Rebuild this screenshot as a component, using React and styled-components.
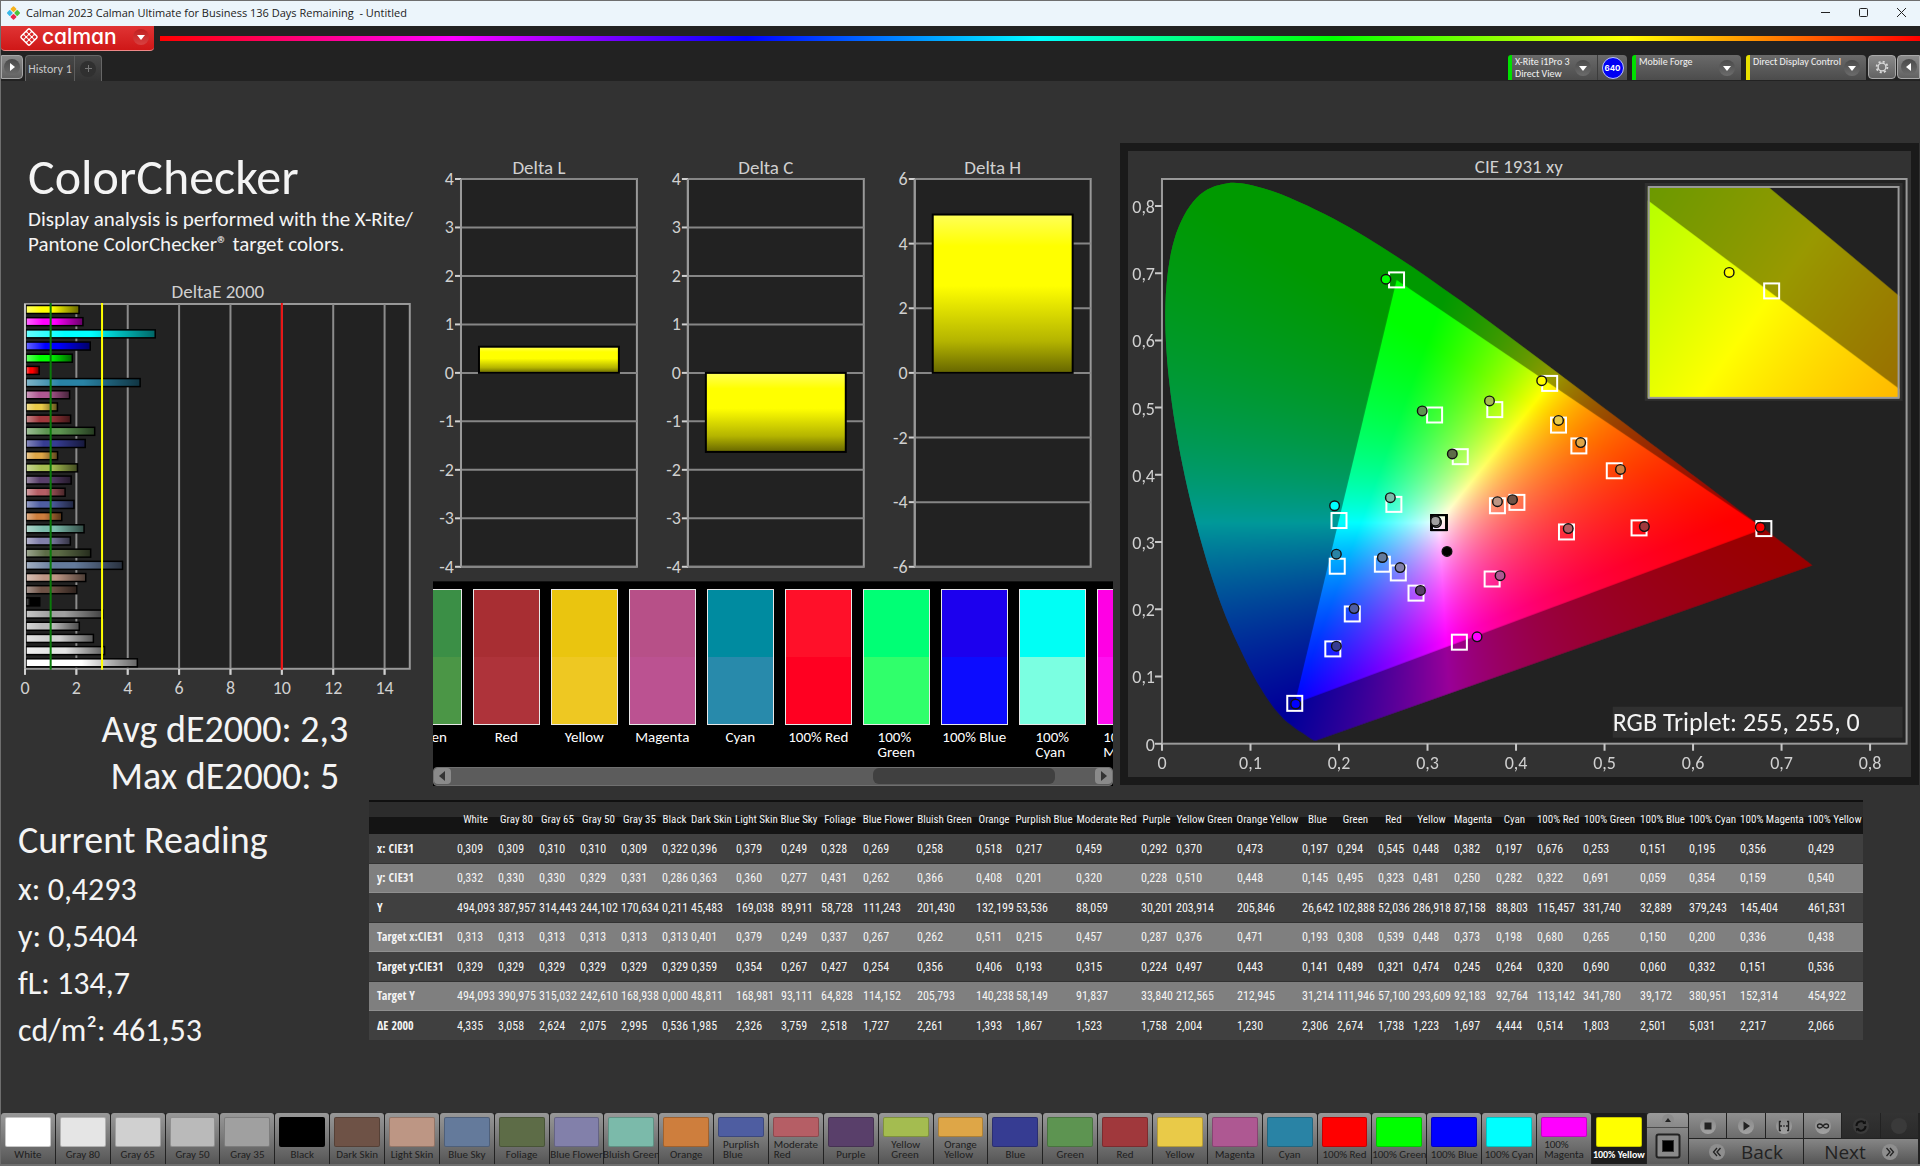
import React, { useLayoutEffect, useRef } from 'react';
import styled, { createGlobalStyle, css } from 'styled-components';

const UI = '"Carlito", "Calibri", "Lato", sans-serif';
const NARROW = '"Roboto Condensed", "Carlito", "Roboto", sans-serif';
const NARROW_BOLD = '"Open Sans Condensed", "Roboto Condensed", "Open Sans", sans-serif';

const GlobalStyle = createGlobalStyle`
  *, *::before, *::after { box-sizing: border-box; }
  body { margin: 0; background: #323232; color: #f4f4f4; font-family: ${UI}; }
  button { font-family: inherit; margin: 0; padding: 0; border: 0; color: inherit; cursor: pointer; }
  h1, h2, p, ul { margin: 0; padding: 0; }
  ul { list-style: none; }
`;

/* ---------- data ---------- */

// name, colour, x, y, Y, target x, target y, target Y, dE2000, column width
const PATCHES = [
  ['White', '#ffffff', '0,309', '0,332', '494,093', '0,313', '0,329', '494,093', '4,335', 41],
  ['Gray 80', '#e5e5e5', '0,309', '0,330', '387,957', '0,313', '0,329', '390,975', '3,058', 41],
  ['Gray 65', '#d0d0d0', '0,310', '0,330', '314,443', '0,313', '0,329', '315,032', '2,624', 41],
  ['Gray 50', '#bababa', '0,310', '0,329', '244,102', '0,313', '0,329', '242,610', '2,075', 41],
  ['Gray 35', '#a0a0a0', '0,309', '0,331', '170,634', '0,313', '0,329', '168,938', '2,995', 41],
  ['Black', '#000000', '0,322', '0,286', '0,211', '0,313', '0,329', '0,000', '0,536', 29],
  ['Dark Skin', '#6e5246', '0,396', '0,363', '45,483', '0,401', '0,359', '48,811', '1,985', 45],
  ['Light Skin', '#bd9684', '0,379', '0,360', '169,038', '0,379', '0,354', '168,981', '2,326', 45],
  ['Blue Sky', '#647a9b', '0,249', '0,277', '89,911', '0,249', '0,267', '93,111', '3,759', 40],
  ['Foliage', '#5d6c47', '0,328', '0,431', '58,728', '0,337', '0,427', '64,828', '2,518', 42],
  ['Blue Flower', '#8280aa', '0,269', '0,262', '111,243', '0,267', '0,254', '114,152', '1,727', 54],
  ['Bluish Green', '#7bbaaa', '0,258', '0,366', '201,430', '0,262', '0,356', '205,793', '2,261', 59],
  ['Orange', '#ce7e3d', '0,518', '0,408', '132,199', '0,511', '0,406', '140,238', '1,393', 40],
  ['Purplish Blue', '#4e5da1', '0,217', '0,201', '53,536', '0,215', '0,193', '58,149', '1,867', 60],
  ['Moderate Red', '#b55e65', '0,459', '0,320', '88,059', '0,457', '0,315', '91,837', '1,523', 65],
  ['Purple', '#593f6a', '0,292', '0,228', '30,201', '0,287', '0,224', '33,840', '1,758', 35],
  ['Yellow Green', '#a4bc50', '0,370', '0,510', '203,914', '0,376', '0,497', '212,565', '2,004', 61],
  ['Orange Yellow', '#dea647', '0,473', '0,448', '205,846', '0,471', '0,443', '212,945', '1,230', 65],
  ['Blue', '#363c92', '0,197', '0,145', '26,642', '0,193', '0,141', '31,214', '2,306', 35],
  ['Green', '#5d9451', '0,294', '0,495', '102,888', '0,308', '0,489', '111,946', '2,674', 41],
  ['Red', '#a0383c', '0,545', '0,323', '52,036', '0,539', '0,321', '57,100', '1,738', 35],
  ['Yellow', '#e9ca48', '0,448', '0,481', '286,918', '0,448', '0,474', '293,609', '1,223', 41],
  ['Magenta', '#ae5892', '0,382', '0,250', '87,158', '0,373', '0,245', '92,183', '1,697', 42],
  ['Cyan', '#2983a5', '0,197', '0,282', '88,803', '0,198', '0,264', '92,764', '4,444', 41],
  ['100% Red', '#ff0000', '0,676', '0,322', '115,457', '0,680', '0,320', '113,142', '0,514', 46],
  ['100% Green', '#00ff00', '0,253', '0,691', '331,740', '0,265', '0,690', '341,780', '1,803', 57],
  ['100% Blue', '#0000ff', '0,151', '0,059', '32,889', '0,150', '0,060', '39,172', '2,501', 49],
  ['100% Cyan', '#00ffff', '0,195', '0,354', '379,243', '0,200', '0,332', '380,951', '5,031', 51],
  ['100% Magenta', '#ff00ff', '0,356', '0,159', '145,404', '0,336', '0,151', '152,314', '2,217', 68],
  ['100% Yellow', '#ffff00', '0,429', '0,540', '461,531', '0,438', '0,536', '454,922', '2,066', 57],
].map(([name, color, x, y, Y, tx, ty, tY, dE, col]) => ({ name, color, x, y, Y, tx, ty, tY, dE, col }));

const TABLE_ROWS = [
  ['x: CIE31', 'x'],
  ['y: CIE31', 'y'],
  ['Y', 'Y'],
  ['Target x:CIE31', 'tx'],
  ['Target y:CIE31', 'ty'],
  ['Target Y', 'tY'],
  ['ΔE 2000', 'dE'],
];

const STACKED = {
  'Purplish Blue': ['Purplish', 'Blue'],
  'Moderate Red': ['Moderate', 'Red'],
  'Yellow Green': ['Yellow', 'Green'],
  'Orange Yellow': ['Orange', 'Yellow'],
  '100% Magenta': ['100%', 'Magenta'],
};

// measured colour above, target colour below
const COMPARISONS = [
  [['Green'], '#3b8f46', '#4b9646'],
  [['Red'], '#a82e33', '#ae333a'],
  [['Yellow'], '#eac50f', '#eec822'],
  [['Magenta'], '#b75088', '#bb5291'],
  [['Cyan'], '#008ba0', '#288aab'],
  [['100% Red'], '#ff1029', '#ff0021'],
  [['100%', 'Green'], '#00ff75', '#30ff6b'],
  [['100% Blue'], '#1c00ee', '#0c0cff'],
  [['100%', 'Cyan'], '#00fff5', '#7bffe1'],
  [['100%', 'Magenta'], '#ff00e4', '#ff10f0'],
];

const READINGS = ['x: 0,4293', 'y: 0,5404', 'fL: 134,7', 'cd/m²: 461,53'];

const num = (s) => parseFloat(s.replace(',', '.'));
const fmt = (n) => String(n).replace('.', ',');

/* ---------- chromaticity drawing ---------- */

const LOCUS = [
  [0.1741, 0.005], [0.1714, 0.0051], [0.1689, 0.0069], [0.1644, 0.0109], [0.1566, 0.0177], [0.151, 0.0227],
  [0.144, 0.0297], [0.1355, 0.0399], [0.1241, 0.0578], [0.1096, 0.0868], [0.0913, 0.1327], [0.0687, 0.2007],
  [0.0454, 0.295], [0.0235, 0.4127], [0.0082, 0.5384], [0.0039, 0.6548], [0.0139, 0.7502], [0.0389, 0.812],
  [0.0743, 0.8338], [0.1142, 0.8262], [0.1547, 0.8059], [0.1929, 0.7816], [0.2296, 0.7543], [0.2658, 0.7243],
  [0.3016, 0.6923], [0.3373, 0.6589], [0.3731, 0.6245], [0.4087, 0.5896], [0.4441, 0.5547], [0.4788, 0.5202],
  [0.5125, 0.4866], [0.5448, 0.4544], [0.5752, 0.4242], [0.6029, 0.3965], [0.627, 0.3725], [0.6482, 0.3514],
  [0.6658, 0.334], [0.6915, 0.3083], [0.7079, 0.292], [0.719, 0.2809], [0.726, 0.274], [0.7347, 0.2653],
];
const GAMUT = [[0.68, 0.32], [0.265, 0.69], [0.15, 0.06]];

function chromaColor(x, y) {
  const X = x / y;
  const Z = (1 - x - y) / y;
  const r = Math.max(0, 3.2406 * X - 1.5372 - 0.4986 * Z);
  const g = Math.max(0, -0.9689 * X + 1.8758 + 0.0415 * Z);
  const b = Math.max(0, 0.0557 * X - 0.204 + 1.057 * Z);
  const m = Math.max(r, g, b) || 1;
  return [r / m, g / m, b / m];
}

function paintChroma(canvas, [x0, x1, y0, y1]) {
  const { width: w, height: h } = canvas;
  const sheet = document.createElement('canvas');
  sheet.width = w;
  sheet.height = h;
  const sctx = sheet.getContext('2d');
  const image = sctx.createImageData(w, h);
  for (let j = 0; j < h; j += 1) {
    const y = Math.max(0.001, y1 - ((j + 0.5) / h) * (y1 - y0));
    for (let i = 0; i < w; i += 1) {
      const c = chromaColor(x0 + ((i + 0.5) / w) * (x1 - x0), y);
      const k = (j * w + i) * 4;
      image.data[k] = c[0] * 255;
      image.data[k + 1] = c[1] * 255;
      image.data[k + 2] = c[2] * 255;
      image.data[k + 3] = 255;
    }
  }
  sctx.putImageData(image, 0, 0);

  const ctx = canvas.getContext('2d');
  const at = ([x, y]) => [((x - x0) / (x1 - x0)) * w, ((y1 - y) / (y1 - y0)) * h];
  ctx.clearRect(0, 0, w, h);

  ctx.save();
  ctx.beginPath();
  ctx.moveTo(...at(LOCUS[0]));
  for (let i = 0; i < LOCUS.length - 1; i += 1) {
    const p0 = at(LOCUS[Math.max(0, i - 1)]);
    const p1 = at(LOCUS[i]);
    const p2 = at(LOCUS[i + 1]);
    const p3 = at(LOCUS[Math.min(LOCUS.length - 1, i + 2)]);
    ctx.bezierCurveTo(
      p1[0] + (p2[0] - p0[0]) / 6, p1[1] + (p2[1] - p0[1]) / 6,
      p2[0] - (p3[0] - p1[0]) / 6, p2[1] - (p3[1] - p1[1]) / 6,
      p2[0], p2[1],
    );
  }
  ctx.closePath();
  ctx.clip();
  ctx.drawImage(sheet, 0, 0);
  ctx.fillStyle = 'rgba(0, 0, 0, 0.4)';
  ctx.fillRect(0, 0, w, h);
  ctx.restore();

  ctx.save();
  ctx.beginPath();
  GAMUT.forEach((p, i) => (i ? ctx.lineTo(...at(p)) : ctx.moveTo(...at(p))));
  ctx.closePath();
  ctx.clip();
  ctx.drawImage(sheet, 0, 0);
  ctx.restore();
}

const ChromaSurface = styled.canvas`
  display: block;
`;

function ChromaCanvas({ width, height, range }) {
  const ref = useRef(null);
  useLayoutEffect(() => paintChroma(ref.current, range), [range]);
  return <ChromaSurface ref={ref} width={width} height={height} />;
}

/* ---------- window chrome ---------- */

const Window = styled.div`
  display: flex;
  flex-direction: column;
  min-height: 100vh;
  border: solid #6e6e6e;
  border-width: 1px 0 2px 1px;
  background: #323232;
`;

const TitleBar = styled.header`
  display: flex;
  align-items: center;
  gap: 6px;
  height: 25px;
  padding: 0 0 2px 6px;
  background: #ecf5fb;
  color: #1c1c1c;
  font-family: "Open Sans", sans-serif;
  font-size: 11px;
  white-space: pre;
`;

const WindowButtons = styled.div`
  display: flex;
  margin-left: auto;
`;

const WindowButton = styled.button`
  display: grid;
  place-items: center;
  width: 38px;
  height: 22px;
  background: transparent;
`;

const BrandRow = styled.div`
  display: flex;
  align-items: flex-start;
  gap: 6px;
  height: 29px;
  background: #222;
`;

const BrandButton = styled.button`
  display: flex;
  align-items: center;
  gap: 3px;
  width: 153px;
  height: 25px;
  padding: 0 5px 2px 18px;
  border-radius: 0 0 4px 4px;
  border-bottom: 1px solid #e88;
  background: linear-gradient(#e03434, #cf1717);
  color: #fff;
`;

const Wordmark = styled.span`
  flex: 1;
  font: 500 21px/22px "Inter", sans-serif;
  font-feature-settings: "cv11";
  text-align: left;
`;

const Rainbow = styled.div`
  flex: 1;
  height: 5px;
  margin-top: 10px;
  background: linear-gradient(90deg, #f00, #f0f, #00f, #0ff, #0f0, #ff0, #f00);
`;

const TabRow = styled.nav`
  display: flex;
  align-items: flex-start;
  gap: 2px;
  height: 26px;
  background: #222;
`;

const EdgeButton = styled.button`
  display: grid;
  place-items: center;
  width: ${(p) => p.$w || 22}px;
  height: 24px;
  border: 1px solid #a8a8a8;
  border-radius: ${(p) => p.$r || '4px'};
  background: linear-gradient(#8a8a8a, #626262);
`;

const Disc = styled.span`
  display: grid;
  flex: none;
  place-items: center;
  width: ${(p) => p.$size || 16}px;
  height: ${(p) => p.$size || 16}px;
  border-radius: 50%;
  background: ${(p) => p.$bg || 'linear-gradient(#4a4a4a, #6c6c6c)'};
`;

const Tabs = styled.div`
  display: flex;
  height: 26px;
  border: 1px solid #666;
  border-bottom: 0;
  border-radius: 4px 4px 0 0;
  background: linear-gradient(#484848, #333);
`;

const Tab = styled.button`
  display: grid;
  place-items: center;
  width: ${(p) => p.$w}px;
  background: transparent;
  color: #c8c8c8;
  font-size: 12px;
  & + & { border-left: 1px solid #5c5c5c; }
`;

const Devices = styled.div`
  display: flex;
  align-items: flex-start;
  gap: 5px;
  margin-left: auto;
`;

const Device = styled.div`
  display: flex;
  width: ${(p) => p.$w}px;
  height: 25px;
  border-left: 4px solid ${(p) => p.$led};
  border-radius: 3px 4px 0 0;
  background: linear-gradient(#6a6a6a, #4c4c4c);
`;

const DeviceButton = styled.button`
  display: flex;
  flex: 1;
  align-items: flex-start;
  justify-content: space-between;
  padding: 1px 6px 0 3px;
  background: transparent;
  color: #f2f2f2;
  font-size: 10px;
  line-height: 12px;
  text-align: left;
  white-space: nowrap;
  & > ${Disc} { margin-top: 4px; }
`;

const MeterSlot = styled.div`
  display: grid;
  place-items: center;
  width: 30px;
  border-left: 1px solid #3c3c3c;
`;

const MeterBadge = styled.span`
  display: grid;
  place-items: center;
  width: 22px;
  height: 22px;
  border: 1px solid #b8c0ff;
  border-radius: 50%;
  background: #0000f4;
  color: #fff;
  font: 700 8px/8px "Inter", sans-serif;
`;

const EdgeGroup = styled.div`
  display: flex;
  gap: 1px;
  margin-left: -3px;
`;

/* ---------- report ---------- */

const Report = styled.main`
  flex: 1;
  padding-top: 62px;
`;

const Charts = styled.section`
  display: grid;
  grid-template-columns: minmax(0, 430fr) minmax(0, 690fr) minmax(0, 800fr);
  align-items: start;
`;

const Summary = styled.div`
  padding-top: 4px;
`;

const Heading = styled.h1`
  padding-left: 27px;
  font-size: 50px;
  font-weight: 400;
  line-height: 60px;
`;

const Intro = styled.p`
  padding-left: 27px;
  margin-bottom: 22px;
  font-size: 21px;
  line-height: 25px;
  white-space: nowrap;
`;

const Totals = styled.div`
  padding-left: 18px;
  padding-top: 2px;
  font-size: 38px;
  line-height: 47px;
  text-align: center;
`;

const Drawing = styled.svg`
  display: block;
  width: 100%;
  height: auto;
  text { font-family: ${UI}; fill: #d0d0d0; font-size: 18px; }
  .title { font-size: 19px; }
  .triplet { font-size: 26px; fill: #f4f4f4; }
`;

const Deltas = styled.div`
  padding-top: 12px;
`;

const Comparator = styled.div`
  margin: 6px 7px 0 2px;
  background: #000;
  border-top: 1px solid #111;
`;

const CompareList = styled.ul`
  display: flex;
  gap: 11px;
  height: 185px;
  padding-top: 7px;
  overflow: hidden;
  &::before { content: ""; flex: none; width: 0; margin-left: -49px; }
`;

const CompareItem = styled.li`
  display: flex;
  flex: none;
  flex-direction: column;
  align-items: center;
  gap: 5px;
  width: 67px;
  color: #fff;
  font-size: 15px;
  line-height: 15px;
`;

const Swatch = styled.div`
  width: 67px;
  height: 136px;
  border: 1px solid #e8e8e8;
  background: linear-gradient(${(p) => p.$top} 50%, ${(p) => p.$bottom} 50%);
`;

const CompareLabel = styled.span`
  white-space: pre;
`;

const ScrollTrack = styled.div`
  display: flex;
  align-items: center;
  height: 19px;
  border: 1px solid #707070;
  border-radius: 4px;
  background: #5c5c5c;
`;

const ScrollArrow = styled.button`
  display: grid;
  place-items: center;
  width: 17px;
  height: 16px;
  border-radius: 4px;
  background: #8a8a8a;
`;

const ScrollLane = styled.div`
  display: flex;
  flex: 1;
  justify-content: flex-end;
  padding-right: 40px;
`;

const ScrollThumb = styled.div`
  width: 182px;
  height: 16px;
  border-radius: 6px;
  background: #404040;
`;

const CiePanel = styled.div`
  margin-right: 1px;
  border: 8px solid #1a1a1a;
  background: #323232;
`;

const Details = styled.section`
  display: grid;
  grid-template-columns: 368px 1fr;
  padding-right: 57px;
`;

const Current = styled.div`
  padding: 14px 0 0 17px;
  font-size: 32px;
  line-height: 47px;
`;

const CurrentHeading = styled.h2`
  font-size: 38px;
  font-weight: 400;
  line-height: 52px;
`;

const ReportTable = styled.table`
  align-self: start;
  width: 100%;
  table-layout: fixed;
  border-collapse: collapse;
  border-top: 2px solid #101010;
  color: #f4f4f4;
  font-family: ${NARROW};
  font-size: 12px;
  line-height: 14px;
  white-space: nowrap;
`;

const LabelCol = styled.col`
  width: 86px;
`;

const ValueCol = styled.col`
  width: ${(p) => p.$w}px;
`;

const HeadRow = styled.tr`
  height: 33px;
  background: linear-gradient(#2c2c2c 50%, #141414 50%);
`;

const BodyRow = styled.tr`
  height: 30px;
  background: ${(p) => (p.$light ? '#7f7f7f' : '#404040')};
  border-bottom: 1px solid ${(p) => (p.$light ? '#8f8f8f' : '#323232')};
  &:nth-child(even) { height: 29px; }
`;

const HeadCell = styled.th`
  padding: 4px 0 0;
  font-size: 11px;
  font-weight: 400;
  text-align: center;
`;

const RowLabel = styled.th`
  padding: 0 0 0 8px;
  font: 700 12px/14px ${NARROW_BOLD};
  text-align: left;
`;

const Cell = styled.td`
  padding: 0 0 0 2px;
`;

/* ---------- bottom bar ---------- */

const BottomBar = styled.footer`
  display: flex;
  height: 51px;
  background: #222;
`;

const PatchStrip = styled.div`
  display: flex;
  flex: 1;
  gap: 1px;
`;

const PatchButton = styled.button`
  display: flex;
  flex: 1 1 0;
  flex-direction: column;
  align-items: center;
  justify-content: space-between;
  min-width: 0;
  padding: 4px 4px 4px;
  border-radius: 3px 3px 0 0;
  background: linear-gradient(#989898, #7c7c7c 45%, #555);
  color: #1e1e1e;
  font-size: 11px;
  line-height: 10px;
  white-space: pre;
  text-align: left;
  ${(p) => p.$active && css`
    background: #1c1c1c;
    color: #fff;
    font-weight: 700;
    font-size: 10px;
  `}
`;

const PatchChip = styled.span`
  align-self: stretch;
  flex: 1;
  margin-bottom: 3px;
  border: 1px solid rgba(0, 0, 0, 0.22);
  border-radius: 2px;
  background: ${(p) => p.$color};
`;

const TargetStack = styled.div`
  display: flex;
  flex-direction: column;
  align-items: stretch;
  width: 41px;
  margin: 0 1px;
  background: linear-gradient(#9a9a9a, #5c5c5c);
  border-radius: 3px 3px 0 0;
`;

const StackTop = styled.button`
  display: grid;
  place-items: center;
  height: 15px;
  border-bottom: 1px solid #4a4a4a;
  background: transparent;
`;

const StackMain = styled.button`
  display: grid;
  place-items: center;
  flex: 1;
  background: transparent;
`;

const Transport = styled.div`
  display: grid;
  grid-template-columns: repeat(6, 1fr);
  grid-template-rows: 25px 25px;
  gap: 1px;
  width: 229px;
  margin-right: 2px;
`;

const TransportButton = styled.button`
  display: grid;
  place-items: center;
  background: ${(p) => (p.$off ? 'linear-gradient(#333, #2a2a2a)' : 'linear-gradient(#909090, #6c6c6c)')};
`;

const StepButton = styled.button`
  display: flex;
  grid-column: span 3;
  align-items: center;
  justify-content: center;
  gap: 16px;
  background: linear-gradient(#868686, #555);
  color: #222;
  font: 400 19px/24px "Open Sans", sans-serif;
`;

/* ---------- small drawings ---------- */

const AppIcon = () => (
  <svg width="13" height="14" viewBox="0 0 14 14" aria-hidden="true">
    <rect x="4.6" y="0.4" width="4.8" height="4.8" rx="0.8" transform="rotate(45 7 2.8)" fill="#f5b21c" />
    <rect x="0.6" y="4.6" width="4.8" height="4.8" rx="0.8" transform="rotate(45 3 7)" fill="#35b8ea" />
    <rect x="8.6" y="4.6" width="4.8" height="4.8" rx="0.8" transform="rotate(45 11 7)" fill="#4cc23a" />
    <rect x="4.6" y="8.8" width="4.8" height="4.8" rx="0.8" transform="rotate(45 7 11.2)" fill="#e6284f" />
  </svg>
);

const BrandIcon = () => (
  <svg width="20" height="20" viewBox="0 0 20 20" aria-hidden="true">
    <rect x="3.2" y="3.2" width="13.6" height="13.6" rx="2" transform="rotate(45 10 10)" fill="#fff" />
    <g transform="rotate(45 10 10)" fill="#d92424">
      {[0, 1, 2].map((r) => [0, 1, 2].map((c) => (
        <rect key={`${r}${c}`} x={4.6 + c * 3.9} y={4.6 + r * 3.9} width="3" height="3" rx="0.9" />
      )))}
    </g>
  </svg>
);

const Triangle = ({ dir = 'down', color = '#fff', w = 8, h = 5 }) => {
  const d = {
    down: `M0 0H${w}L${w / 2} ${h}Z`,
    up: `M0 ${h}H${w}L${w / 2} 0Z`,
    right: `M0 0V${h}L${w} ${h / 2}Z`,
    left: `M${w} 0V${h}L0 ${h / 2}Z`,
  }[dir];
  return <svg width={w} height={h} viewBox={`0 0 ${w} ${h}`} aria-hidden="true"><path d={d} fill={color} /></svg>;
};

const Gear = () => (
  <svg width="14" height="14" viewBox="0 0 14 14" fill="none" stroke="#d8d8d8" aria-hidden="true">
    <circle cx="7" cy="7" r="3.9" strokeWidth="1.4" />
    <circle cx="7" cy="7" r="5.4" strokeWidth="1.8" strokeDasharray="2.1 2.14" />
  </svg>
);

const glyph = { width: 14, height: 14, viewBox: '0 0 14 14', 'aria-hidden': true };
const ICONS = {
  Stop: <svg {...glyph}><rect x="3.5" y="3.5" width="7" height="7" fill="#222" /></svg>,
  Play: <svg {...glyph}><path d="M4.5 2.5V11.5L11 7Z" fill="#222" /></svg>,
  'Read series': (
    <svg {...glyph} fill="none" stroke="#222" strokeWidth="1.4">
      <path d="M4 2.5H2.5V11.5H4M10 2.5H11.5V11.5H10M3 7H5M6.3 7H7.7M9 7H11" />
    </svg>
  ),
  Continuous: (
    <svg {...glyph} fill="none" stroke="#222" strokeWidth="1.4">
      <path d="M7 7C5.5 4.500 1.500 4.300 1.500 7S5.500 9.500 7 7S12.500 4.300 12.500 7S8.500 9.500 7 7Z" />
    </svg>
  ),
  Refresh: (
    <svg {...glyph} fill="none" stroke="#111" strokeWidth="2">
      <path d="M2.5 7A4.5 4.5 0 0 1 10.5 4M11.5 7A4.5 4.5 0 0 1 3.5 10" />
      <path d="M11.8 1.5V5H8.5ZM2.2 12.5V9H5.5Z" fill="#111" stroke="none" />
    </svg>
  ),
  Idle: null,
};

const Chevrons = ({ flip }) => (
  <svg width="10" height="10" viewBox="0 0 10 10" fill="none" stroke="#222" strokeWidth="1.3" aria-hidden="true">
    <path d={flip ? 'M1.5 1L5 5L1.5 9M5 1L8.5 5L5 9' : 'M5 1L1.5 5L5 9M8.5 1L5 5L8.5 9'} />
  </svg>
);

/* ---------- charts ---------- */

function DeltaEChart() {
  const unit = 25.7;
  const x0 = 24;
  const bars = [...PATCHES].reverse();
  return (
    <Drawing viewBox="0 280 430 425" role="img" aria-label="DeltaE 2000 by patch">
      <defs>
        <linearGradient id="barShade">
          <stop offset="0" stopColor="#fff" stopOpacity="0.4" />
          <stop offset="0.3" stopColor="#fff" stopOpacity="0" />
          <stop offset="0.5" stopColor="#000" stopOpacity="0" />
          <stop offset="1" stopColor="#000" stopOpacity="0.6" />
        </linearGradient>
      </defs>
      <text className="title" x="217" y="299" textAnchor="middle">DeltaE 2000</text>
      <rect x={x0} y="305" width="385" height="365" fill="#222" stroke="#999" strokeWidth="2" />
      {[0, 2, 4, 6, 8, 10, 12, 14].map((v) => (
        <g key={v}>
          <path d={`M${x0 + v * unit} 305V676`} stroke="#8c8c8c" strokeWidth="2" />
          <path d={`M${x0 + v * unit} 670V676`} stroke="#d0d0d0" strokeWidth="2" />
          <text x={x0 + v * unit} y="695" textAnchor="middle">{v}</text>
        </g>
      ))}
      {bars.map((p, i) => {
        const box = { x: x0 + 1, y: 306.5 + i * 12.19, width: num(p.dE) * unit, height: 8 };
        return (
          <g key={p.name}>
            <rect {...box} fill={p.color} />
            <rect {...box} fill="url(#barShade)" stroke="#000" strokeWidth="1.5" />
          </g>
        );
      })}
      <path d={`M${x0} 305V670`} stroke="#c4c4c4" strokeWidth="2" />
      <path d={`M${x0 + unit} 304V671`} stroke="#0a7a0a" strokeWidth="2" />
      <path d={`M${x0 + unit * 3} 304V671`} stroke="#ff0" strokeWidth="2" />
      <path d={`M${x0 + unit * 10} 304V671`} stroke="#f01010" strokeWidth="2" />
    </Drawing>
  );
}

function DeltaColumn({ left, title, max, step, value }) {
  const top = 179;
  const mid = 373;
  const perUnit = 194 / max;
  const ticks = [];
  for (let v = max; v >= -max; v -= step) ticks.push(v);
  const h = Math.abs(value) * perUnit;
  return (
    <g>
      <text className="title" x={left + 78} y="174" textAnchor="middle">{title}</text>
      <rect x={left} y={top} width="176" height="388" fill="#222" stroke="#999" strokeWidth="2" />
      {ticks.map((v) => (
        <g key={v}>
          <path d={`M${left} ${mid - v * perUnit}h176`} stroke="#868686" strokeWidth="2" />
          <path d={`M${left - 6} ${mid - v * perUnit}h6`} stroke="#d0d0d0" strokeWidth="2" />
          <text x={left - 7} y={mid + 6 - v * perUnit} textAnchor="end">{v}</text>
        </g>
      ))}
      <path d={`M${left} ${top}v388`} stroke="#999" strokeWidth="2" />
      <rect x={left + 18} y={value > 0 ? mid - h : mid} width="140" height={h} fill="url(#yellowBar)" stroke="#000" strokeWidth="2" />
    </g>
  );
}

function DeltaCharts() {
  return (
    <Drawing viewBox="430 155 690 420" role="img" aria-label="Delta L, Delta C and Delta H">
      <defs>
        <linearGradient id="yellowBar" x2="0" y2="1">
          <stop offset="0" stopColor="#ffff58" />
          <stop offset="0.2" stopColor="#ff0" />
          <stop offset="0.45" stopColor="#ff0" />
          <stop offset="0.8" stopColor="#b4b400" />
          <stop offset="1" stopColor="#666600" />
        </linearGradient>
      </defs>
      <DeltaColumn left={460} title="Delta L" max={4} step={1} value={0.54} />
      <DeltaColumn left={687} title="Delta C" max={4} step={1} value={-1.63} />
      <DeltaColumn left={914} title="Delta H" max={6} step={2} value={4.9} />
    </Drawing>
  );
}

const MAIN_RANGE = [0, 0.8412, 0, 0.8416];
const INSET_RANGE = [0.4124, 0.4636, 0.5108, 0.5618];

function CieChart() {
  const px = (x) => 1162 + x * 885.6;
  const py = (y) => 744 - y * 672.5;
  const steps = [0, 0.1, 0.2, 0.3, 0.4, 0.5, 0.6, 0.7, 0.8];
  return (
    <Drawing viewBox="1128 151 783 626" role="img" aria-label="CIE 1931 xy chromaticity">
      <text className="title" x="1519" y="173" textAnchor="middle">CIE 1931 xy</text>
      <rect x="1162" y="178" width="745" height="566" fill="#222" />
      <foreignObject x="1162" y="178" width="745" height="566">
        <ChromaCanvas width={745} height={566} range={MAIN_RANGE} />
      </foreignObject>
      <rect x="1162" y="179" width="745" height="565" fill="none" stroke="#9a9a9a" strokeWidth="2" />
      {steps.map((v) => (
        <g key={v}>
          <path d={`M${px(v)} 744v7M1162 ${py(v)}h-7`} stroke="#c8c8c8" strokeWidth="2" />
          <text x={px(v)} y="769" textAnchor="middle">{fmt(v)}</text>
          <text x="1155" y={py(v) + 7} textAnchor="end">{fmt(v)}</text>
        </g>
      ))}
      {PATCHES.map((p, i) => (
        <rect
          key={p.name}
          x={px(num(p.tx)) - 7.5}
          y={py(num(p.ty)) - 7.5}
          width="15"
          height="15"
          fill="none"
          stroke={i < 6 ? '#000' : '#fff'}
          strokeWidth="2"
        />
      ))}
      {PATCHES.map((p) => (
        <circle key={p.name} cx={px(num(p.x))} cy={py(num(p.y))} r="4.8" fill={p.color} stroke="#111" strokeWidth="1.4" />
      ))}
      <rect x="1645" y="183" width="258" height="218" fill="#303030" />
      <rect x="1648" y="187" width="252" height="211" fill="#222" />
      <foreignObject x="1648" y="187" width="252" height="211">
        <ChromaCanvas width={252} height={211} range={INSET_RANGE} />
      </foreignObject>
      <rect x="1649" y="187" width="250" height="211" fill="none" stroke="#9a9a9a" strokeWidth="2" />
      <rect x="1764.5" y="283.5" width="15" height="15" fill="none" stroke="#fff" strokeWidth="2" />
      <circle cx="1729.5" cy="272.5" r="4.8" fill="#ff0" stroke="#111" strokeWidth="1.4" />
      <rect x="1613" y="707" width="290" height="31" fill="#303030" />
      <text className="triplet" x="1613" y="731">RGB Triplet: 255, 255, 0</text>
    </Drawing>
  );
}

/* ---------- page ---------- */

const DropDisc = () => <Disc><Triangle /></Disc>;

export default function App() {
  return (
    <>
      <GlobalStyle />
      <Window>
        <TitleBar>
          <AppIcon />
          <span>Calman 2023 Calman Ultimate for Business 136 Days Remaining  - Untitled</span>
          <WindowButtons>
            <WindowButton aria-label="Minimize">
              <svg width="9" height="9" stroke="#222" fill="none"><path d="M0 4.5H9" /></svg>
            </WindowButton>
            <WindowButton aria-label="Maximize">
              <svg width="9" height="9" stroke="#222" fill="none"><rect x="0.5" y="0.5" width="8" height="8" rx="1" /></svg>
            </WindowButton>
            <WindowButton aria-label="Close">
              <svg width="9" height="9" stroke="#222" fill="none"><path d="M0 0L9 9M9 0L0 9" /></svg>
            </WindowButton>
          </WindowButtons>
        </TitleBar>

        <BrandRow>
          <BrandButton>
            <BrandIcon />
            <Wordmark>calman</Wordmark>
            <Disc $bg="linear-gradient(#c02020, #d84040)"><Triangle /></Disc>
          </BrandButton>
          <Rainbow />
        </BrandRow>

        <TabRow>
          <EdgeButton aria-label="Show workflow" $r="0 4px 4px 0"><Disc><Triangle dir="right" w={5} h={8} /></Disc></EdgeButton>
          <Tabs>
            <Tab $w={48}>History 1</Tab>
            <Tab $w={27} aria-label="Add history"><Disc $bg="#303030"><svg width="7" height="7" stroke="#777"><path d="M0 3.5H7M3.5 0V7" /></svg></Disc></Tab>
          </Tabs>
          <Devices>
            <Device $w={119} $led="#00e000">
              <DeviceButton><span>X-Rite i1Pro 3<br />Direct View</span><DropDisc /></DeviceButton>
              <MeterSlot><MeterBadge>640</MeterBadge></MeterSlot>
            </Device>
            <Device $w={109} $led="#00e000">
              <DeviceButton>Mobile Forge<DropDisc /></DeviceButton>
            </Device>
            <Device $w={120} $led="#e8e000">
              <DeviceButton>Direct Display Control<DropDisc /></DeviceButton>
            </Device>
            <EdgeGroup>
              <EdgeButton aria-label="Settings" $w={28}><Gear /></EdgeButton>
              <EdgeButton aria-label="Show panel" $w={23} $r="4px 0 0 4px"><Disc><Triangle dir="left" w={5} h={8} /></Disc></EdgeButton>
            </EdgeGroup>
          </Devices>
        </TabRow>

        <Report>
          <Charts>
            <Summary>
              <Heading>ColorChecker</Heading>
              <Intro>
                Display analysis is performed with the X-Rite/<br />
                Pantone ColorChecker® target colors.
              </Intro>
              <DeltaEChart />
              <Totals>
                <p>Avg dE2000: 2,3</p>
                <p>Max dE2000: 5</p>
              </Totals>
            </Summary>

            <Deltas>
              <DeltaCharts />
              <Comparator>
                <CompareList>
                  {COMPARISONS.map(([lines, top, bottom]) => (
                    <CompareItem key={lines.join(' ')}>
                      <Swatch $top={top} $bottom={bottom} />
                      <CompareLabel>{lines.join('\n')}</CompareLabel>
                    </CompareItem>
                  ))}
                </CompareList>
                <ScrollTrack>
                  <ScrollArrow aria-label="Scroll left"><Triangle dir="left" color="#333" w={6} h={10} /></ScrollArrow>
                  <ScrollLane><ScrollThumb /></ScrollLane>
                  <ScrollArrow aria-label="Scroll right"><Triangle dir="right" color="#333" w={6} h={10} /></ScrollArrow>
                </ScrollTrack>
              </Comparator>
            </Deltas>

            <CiePanel><CieChart /></CiePanel>
          </Charts>

          <Details>
            <Current>
              <CurrentHeading>Current Reading</CurrentHeading>
              {READINGS.map((r) => <p key={r}>{r}</p>)}
            </Current>
            <ReportTable>
              <colgroup>
                <LabelCol />
                {PATCHES.map((p) => <ValueCol key={p.name} $w={p.col} />)}
              </colgroup>
              <thead>
                <HeadRow>
                  <td />
                  {PATCHES.map((p) => <HeadCell key={p.name} scope="col">{p.name}</HeadCell>)}
                </HeadRow>
              </thead>
              <tbody>
                {TABLE_ROWS.map(([label, key], i) => (
                  <BodyRow key={key} $light={i % 2 === 1}>
                    <RowLabel scope="row">{label}</RowLabel>
                    {PATCHES.map((p) => <Cell key={p.name}>{p[key]}</Cell>)}
                  </BodyRow>
                ))}
              </tbody>
            </ReportTable>
          </Details>
        </Report>

        <BottomBar>
          <PatchStrip>
            {PATCHES.map((p) => (
              <PatchButton key={p.name} $active={p.name === '100% Yellow'}>
                <PatchChip $color={p.color} />
                <span>{(STACKED[p.name] || [p.name]).join('\n')}</span>
              </PatchButton>
            ))}
          </PatchStrip>
          <TargetStack>
            <StackTop aria-label="More patterns"><Disc $size={12} $bg="#8c8c8c"><Triangle dir="up" color="#222" w={6} h={4} /></Disc></StackTop>
            <StackMain aria-label="Pattern window">
              <svg width="26" height="26" viewBox="0 0 26 26">
                <rect x="1.5" y="1.5" width="23" height="23" rx="2" fill="#8a8a8a" stroke="#222" strokeWidth="2" />
                <rect x="7.5" y="7.5" width="11" height="11" fill="#000" stroke="#333" />
              </svg>
            </StackMain>
          </TargetStack>
          <Transport>
            {Object.entries(ICONS).map(([label, icon]) => {
              const off = label === 'Refresh' || label === 'Idle';
              return (
                <TransportButton key={label} aria-label={label} $off={off}>
                  <Disc $bg={off ? '#3a3a3a' : 'linear-gradient(#8a8a8a, #a2a2a2)'}>{icon}</Disc>
                </TransportButton>
              );
            })}
            <StepButton><Disc $bg="#8e8e8e"><Chevrons /></Disc>Back</StepButton>
            <StepButton>Next<Disc $bg="#8e8e8e"><Chevrons flip /></Disc></StepButton>
          </Transport>
        </BottomBar>
      </Window>
    </>
  );
}
